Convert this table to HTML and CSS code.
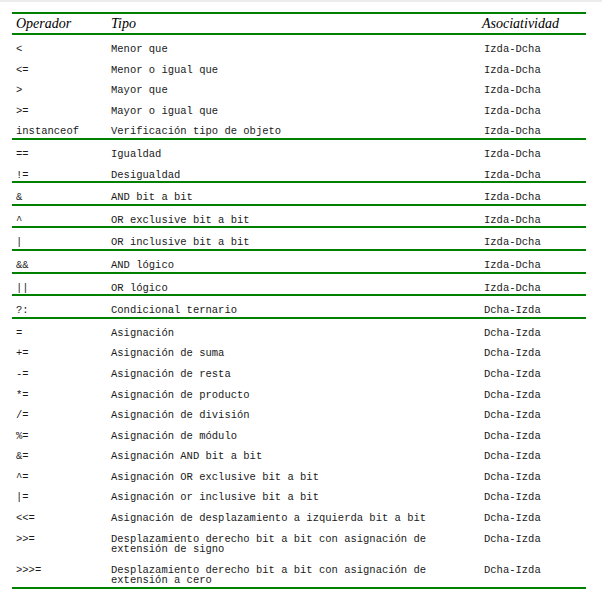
FILE: index.html
```html
<!DOCTYPE html>
<html lang="es">
<head>
<meta charset="utf-8">
<title>Operadores</title>
<link rel="stylesheet" href="styles.css">
</head>
<body>
<div class="topbar"></div>
<div class="table">
  <div class="head">
    <div>Operador</div><div>Tipo</div><div class="assoc-h">Asociatividad</div>
  </div>
  <div class="group">
    <div class="row"><div>&lt;</div><div>Menor que</div><div>Izda-Dcha</div></div>
    <div class="row"><div>&lt;=</div><div>Menor o igual que</div><div>Izda-Dcha</div></div>
    <div class="row"><div>&gt;</div><div>Mayor que</div><div>Izda-Dcha</div></div>
    <div class="row"><div>&gt;=</div><div>Mayor o igual que</div><div>Izda-Dcha</div></div>
    <div class="row"><div>instanceof</div><div>Verificación tipo de objeto</div><div>Izda-Dcha</div></div>
  </div>
  <div class="group">
    <div class="row"><div>==</div><div>Igualdad</div><div>Izda-Dcha</div></div>
    <div class="row"><div>!=</div><div>Desigualdad</div><div>Izda-Dcha</div></div>
  </div>
  <div class="group">
    <div class="row"><div>&amp;</div><div>AND bit a bit</div><div>Izda-Dcha</div></div>
  </div>
  <div class="group">
    <div class="row"><div>^</div><div>OR exclusive bit a bit</div><div>Izda-Dcha</div></div>
  </div>
  <div class="group">
    <div class="row"><div>|</div><div>OR inclusive bit a bit</div><div>Izda-Dcha</div></div>
  </div>
  <div class="group">
    <div class="row"><div>&amp;&amp;</div><div>AND lógico</div><div>Izda-Dcha</div></div>
  </div>
  <div class="group">
    <div class="row"><div>||</div><div>OR lógico</div><div>Izda-Dcha</div></div>
  </div>
  <div class="group">
    <div class="row"><div>?:</div><div>Condicional ternario</div><div>Dcha-Izda</div></div>
  </div>
  <div class="group">
    <div class="row"><div>=</div><div>Asignación</div><div>Dcha-Izda</div></div>
    <div class="row"><div>+=</div><div>Asignación de suma</div><div>Dcha-Izda</div></div>
    <div class="row"><div>-=</div><div>Asignación de resta</div><div>Dcha-Izda</div></div>
    <div class="row"><div>*=</div><div>Asignación de producto</div><div>Dcha-Izda</div></div>
    <div class="row"><div>/=</div><div>Asignación de división</div><div>Dcha-Izda</div></div>
    <div class="row"><div>%=</div><div>Asignación de módulo</div><div>Dcha-Izda</div></div>
    <div class="row"><div>&amp;=</div><div>Asignación AND bit a bit</div><div>Dcha-Izda</div></div>
    <div class="row"><div>^=</div><div>Asignación OR exclusive bit a bit</div><div>Dcha-Izda</div></div>
    <div class="row"><div>|=</div><div>Asignación or inclusive bit a bit</div><div>Dcha-Izda</div></div>
    <div class="row"><div>&lt;&lt;=</div><div>Asignación de desplazamiento a izquierda bit a bit</div><div>Dcha-Izda</div></div>
    <div class="row"><div>&gt;&gt;=</div><div>Desplazamiento derecho bit a bit con asignación de<br>extensión de signo</div><div>Dcha-Izda</div></div>
    <div class="row"><div>&gt;&gt;&gt;=</div><div>Desplazamiento derecho bit a bit con asignación de<br>extensión a cero</div><div>Dcha-Izda</div></div>
  </div>
</div>
</body>
</html>
```

FILE: styles.css
```css
html, body {
  margin: 0;
  padding: 0;
  background: #ffffff;
}

.topbar {
  height: 2px;
  background: #ececec;
}

.table {
  margin: 10px 0 0 12px;
  width: 574px;
  border-top: 2px solid #008000;
}

.head {
  display: grid;
  grid-template-columns: 95px 373px 1fr;
  height: 19px;
  border-bottom: 2px solid #008000;
  font-family: "Liberation Serif", "Times New Roman", serif;
  font-style: italic;
  font-size: 14px;
  line-height: 17px;
  color: #000;
}

.head > div {
  padding-left: 4px;
  padding-top: 1px;
}

.head > .assoc-h {
  padding-left: 2px;
}

.group {
  border-bottom: 2px solid #008000;
}

.row {
  display: grid;
  grid-template-columns: 95px 373px 1fr;
  padding: 9px 0 1.1px;
  font-family: "Liberation Mono", "Courier New", monospace;
  font-size: 10.5px;
  line-height: 10.5px;
  color: #1a1a1a;
}

.row > div {
  padding-left: 4px;
}
```
